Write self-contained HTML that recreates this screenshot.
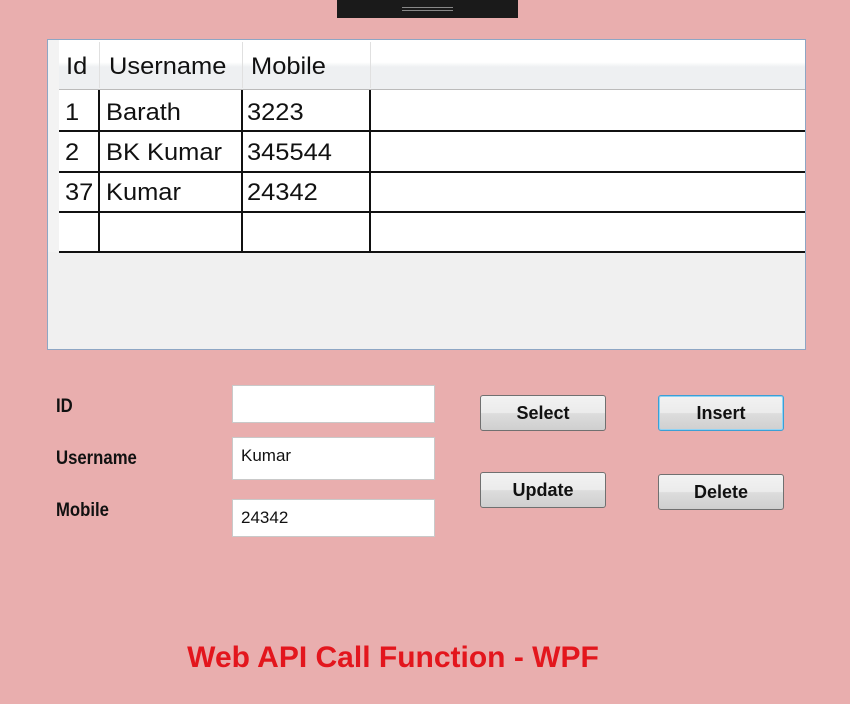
<!DOCTYPE html>
<html><head><style>
body{margin:0;width:850px;height:704px;background:#e9aeae;position:relative;overflow:hidden;font-family:"Liberation Sans",sans-serif}
.a{position:absolute}
.grid{left:47px;top:39px;width:757px;height:309px;border:1px solid #8ea6c4;background:#f0f0f0}
.hdr{left:0;top:0;width:757px;height:49px;background:linear-gradient(#fff 0%,#fff 45%,#eef0f2 55%,#eef0f2 100%)}
.hl{background:#111;height:2px;left:11px;width:746px}
.vl{background:#111;width:2px}
.t{font-size:24px;color:#111;transform:scaleX(1.06);transform-origin:left}
.lbl{font-size:19px;font-weight:bold;color:#111;transform:scaleX(.88);transform-origin:left}
.tb{background:#fff;border:1px solid #c9c9c9;width:203px;font-size:17px;color:#111;box-sizing:border-box;padding:8px 0 0 8px}
.btn{width:126px;height:36px;box-sizing:border-box;border:1px solid #707070;border-radius:3px;background:linear-gradient(#f2f2f2 0%,#ebebeb 50%,#dddddd 51%,#cfcfcf 100%);font-size:18px;font-weight:bold;text-align:center;line-height:34px;color:#111}
</style></head><body>
<div class="a" style="left:337px;top:0;width:181px;height:18px;background:#1a1a1a"></div>
<div class="a" style="left:402px;top:7px;width:51px;height:1px;background:#888"></div>
<div class="a" style="left:402px;top:10px;width:51px;height:1px;background:#888"></div>
<div class="a grid">
 <div class="a hdr"></div>
 <div class="a" style="left:11px;top:49px;width:746px;height:163px;background:#fff"></div>
 <div class="a" style="left:0;top:0;width:11px;height:212px;background:#f3f3f3"></div>
 <div class="a hl" style="top:49px;height:1px;background:#bbb"></div>
 <div class="a hl" style="top:90px"></div>
 <div class="a hl" style="top:131px"></div>
 <div class="a hl" style="top:171px"></div>
 <div class="a hl" style="top:211px"></div>
 <div class="a vl" style="left:50px;top:50px;height:162px"></div>
 <div class="a vl" style="left:193px;top:50px;height:162px"></div>
 <div class="a vl" style="left:321px;top:50px;height:162px"></div>
 <div class="a" style="left:51px;top:2px;width:1px;height:46px;background:#e0e0e0"></div>
 <div class="a" style="left:194px;top:2px;width:1px;height:46px;background:#e0e0e0"></div>
 <div class="a" style="left:322px;top:2px;width:1px;height:46px;background:#e0e0e0"></div>
 <div class="a t" style="left:18px;top:13px">Id</div>
 <div class="a t" style="left:61px;top:13px">Username</div>
 <div class="a t" style="left:203px;top:13px">Mobile</div>
 <div class="a t" style="left:17px;top:59px">1</div>
 <div class="a t" style="left:58px;top:59px">Barath</div>
 <div class="a t" style="left:199px;top:59px">3223</div>
 <div class="a t" style="left:17px;top:99px">2</div>
 <div class="a t" style="left:58px;top:99px">BK Kumar</div>
 <div class="a t" style="left:199px;top:99px">345544</div>
 <div class="a t" style="left:17px;top:139px">37</div>
 <div class="a t" style="left:58px;top:139px">Kumar</div>
 <div class="a t" style="left:199px;top:139px">24342</div>
</div>
<div class="a lbl" style="left:56px;top:396px">ID</div>
<div class="a lbl" style="left:56px;top:448px">Username</div>
<div class="a lbl" style="left:56px;top:500px">Mobile</div>
<div class="a tb" style="left:232px;top:385px;height:38px"></div>
<div class="a tb" style="left:232px;top:437px;height:43px">Kumar</div>
<div class="a tb" style="left:232px;top:499px;height:38px">24342</div>
<div class="a btn" style="left:480px;top:395px">Select</div>
<div class="a btn" style="left:658px;top:395px;border-color:#3c9fd4;box-shadow:inset 0 0 0 1px #8fd3f5">Insert</div>
<div class="a btn" style="left:480px;top:472px">Update</div>
<div class="a btn" style="left:658px;top:474px">Delete</div>
<div class="a" style="left:0;width:786px;top:641px;text-align:center;font-size:30px;font-weight:bold;color:#e3161d;transform:scaleX(1.0)">Web API Call Function - WPF</div>
</body></html>
